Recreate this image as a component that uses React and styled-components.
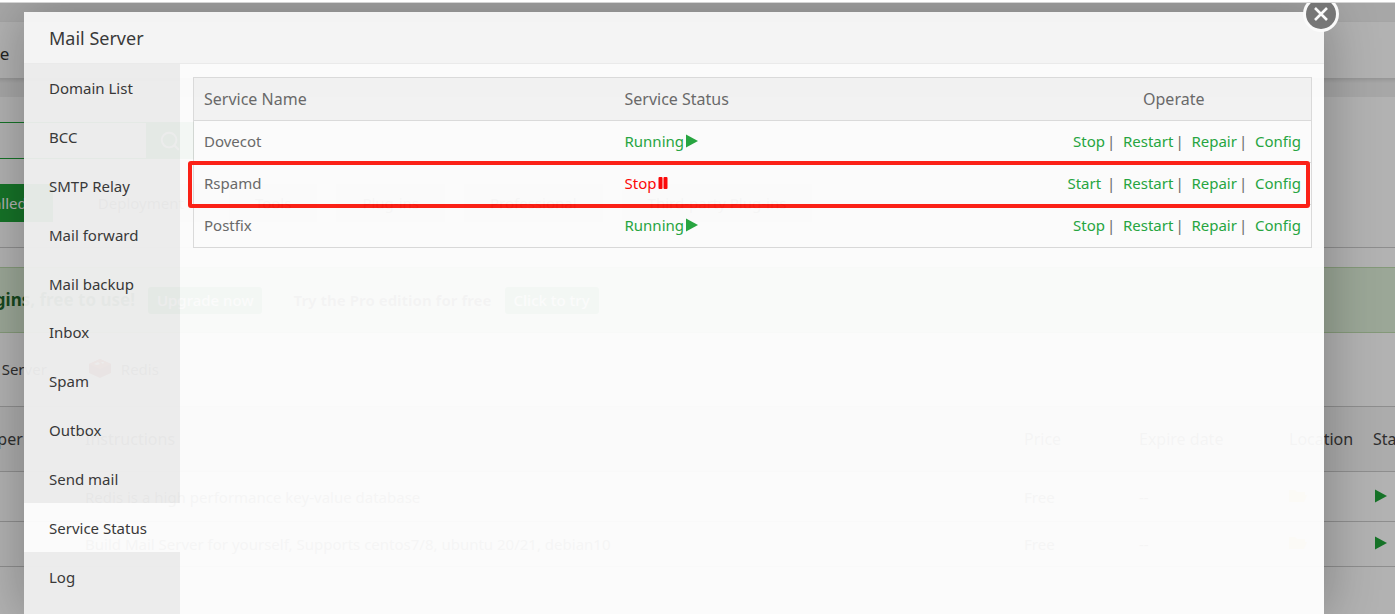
import React, {useState} from 'react';
import styled, {createGlobalStyle, css} from "styled-components";
import {Search} from "lucide-react";

const GlobalStyle = createGlobalStyle`
* {
  box-sizing: border-box;
}
body {
  margin: 0;
  background: #fff;
  color: #555;
  font-family: "Noto Sans", "Open Sans", sans-serif;
  font-size: 15px;
  line-height: 20px;
}
button, input {
  font: inherit;
}
`

const Frame = styled.div`
display: flex;
flex-direction: column;
height: 100vh;
overflow: hidden;
`
const TopStrip = styled.div`
flex: none;
height: 3px;
background: #fff;
border-bottom: 1px solid #d4d4d4;
`
const Viewport = styled.div`
position: relative;
flex: 1;
min-height: 0;
overflow: hidden;
background: #f0f0f0;
`

/* plugin store page, dimmed behind the dialog */
const Page = styled.div`
margin: 0 -60px 0 -54px;
padding-top: 19px;
`
const PageHeader = styled.header`
height: 56px;
margin-bottom: 19px;
padding: 20px 0 0 15px;
background: #fff;
box-shadow: 0 2px 4px rgba(0, 0, 0, 0.12);
color: #333;
font-size: 17px;
line-height: 24px;
`
const Card = styled.section`
padding-top: 25px;
background: #fff;
min-height: 700px;
`
const SearchForm = styled.form`
display: flex;
height: 37px;
`
const SearchInput = styled.input`
width: 200px;
border: 1px solid #20a53a;
border-right: 0;
outline: none;
`
const SearchButton = styled.button`
display: flex;
align-items: center;
justify-content: center;
width: 48px;
padding: 0;
border: 0;
background: #20a53a;
color: #fff;
`
const Tabs = styled.div`
display: flex;
gap: 19px;
margin-left: -6px;
padding: 25px 0;
border-bottom: 1px solid #ccc;
`
const Tab = styled.button`
height: 38px;
padding: 0 26px;
border: 0;
background: ${({$active}) => $active ? '#20a53a' : '#f5f5f5'};
color: ${({$active}) => $active ? '#fff' : '#555'};
`
const Banner = styled.div`
display: flex;
align-items: center;
height: 66px;
margin: 19px 0 0;
border: 1px solid #bddcae;
border-width: 1px 0;
background: #dff0d8;
color: #333;
font-weight: bold;
`
const BannerLead = styled.div`
display: flex;
justify-content: flex-end;
width: 189px;
margin-right: 13px;
color: #20662c;
font-size: 17px;
white-space: nowrap;
`
const BannerNote = styled.span`
margin: 0 13px 0 31px;
`
const BannerButton = styled.button`
height: 27px;
padding: 0 9px;
border: 0;
border-radius: 3px;
background: #20a53a;
color: #fff;
font-weight: 500;
`
const Recent = styled.div`
display: flex;
align-items: center;
gap: 42px;
height: 73px;
padding: 0 0 2px 22px;
`
const RecentItem = styled.span`
display: flex;
align-items: center;
gap: 10px;
color: #444;
`
const PluginTable = styled.table`
width: 100%;
table-layout: fixed;
border-collapse: collapse;
border-top: 1px solid #ccc;
th, td {
  height: 45px;
  padding: 0 8px;
  border-bottom: 1px solid #ccc;
  text-align: left;
  white-space: nowrap;
}
th:first-child {
  padding-left: 0;
}
td:last-child {
  padding-left: 10px;
}
tbody tr:first-child td {
  height: 50px;
}
th {
  height: 65px;
  background: #f6f6f6;
  color: #444;
  font-size: 16px;
  font-weight: normal;
}
`
const Shade = styled.div`
position: absolute;
inset: 0;
background: rgba(0, 0, 0, 0.3);
`

const Dialog = styled.section`
position: absolute;
top: 9px;
right: 71px;
bottom: 0;
left: 24px;
display: flex;
flex-direction: column;
background: #fff;
box-shadow: 1px 1px 50px rgba(0, 0, 0, 0.3);
opacity: 0.95;
`
const DialogTitle = styled.h1`
flex: none;
height: 52px;
margin: 0;
padding: 0 25px;
border-bottom: 1px solid #eee;
background: #f8f8f8;
color: #333;
font-size: 18px;
font-weight: normal;
line-height: 52px;
`
const CloseButton = styled.button`
position: absolute;
top: -16px;
right: -15px;
width: 36px;
height: 36px;
padding: 0;
border: 0;
background: none;
cursor: pointer;
svg {
  display: block;
}
`
const DialogBody = styled.div`
display: flex;
flex: 1;
min-height: 0;
`
const Sidebar = styled.nav`
flex: none;
width: 156px;
background: #f0f0f0;
`
const Menu = styled.ul`
display: grid;
grid-auto-rows: 1fr;
height: 537px;
margin: 0;
padding: 0;
list-style: none;
`
const MenuButton = styled.button`
width: 100%;
height: 100%;
padding: 0 25px;
border: 0;
background: none;
color: #333;
text-align: left;
white-space: nowrap;
cursor: pointer;
${({$active}) => $active && css`
  background: #fff;
`}
`
const Content = styled.div`
flex: 1;
padding: 13px 12px 13px 13px;
`
const ServiceTable = styled.table`
width: 100%;
table-layout: fixed;
border-collapse: collapse;
border: 1px solid #ddd;
color: #666;
`
const HeadCell = styled.th`
width: ${({$width}) => $width || 'auto'};
height: 43px;
padding: 0 10px;
border-bottom: 1px solid #ddd;
background: #f6f6f6;
font-size: 16px;
font-weight: normal;
text-align: ${({$align}) => $align || 'left'};
`
const Cell = styled.td`
height: 42px;
padding: 0 10px 2px;
text-align: ${({$align}) => $align || 'left'};
white-space: nowrap;
`
const Row = styled.tr`
position: relative;
border-bottom: 1px solid #ddd;
&:last-child td {
  height: 43px;
}
`
/* frame round the row of a stopped service */
const RowMark = styled.span`
position: absolute;
inset: -2px 2px -4px -6px;
border: 4px solid #ff1a0f;
border-radius: 3px;
pointer-events: none;
`
const Status = styled.span`
display: flex;
align-items: center;
gap: 2px;
color: ${({$running}) => $running ? '#20a53a' : '#f00'};
`
const Actions = styled.div`
display: flex;
justify-content: flex-end;
`
const Action = styled.a`
color: #20a53a;
text-decoration: none;
`
const Divider = styled.span`
width: 18px;
padding-left: 2px;
text-align: left;
`

const menu = ['Domain List', 'BCC', 'SMTP Relay', 'Mail forward', 'Mail backup', 'Inbox', 'Spam', 'Outbox', 'Send mail', 'Service Status', 'Log']

const services = [
    {name: 'Dovecot', running: true},
    {name: 'Rspamd', running: false},
    {name: 'Postfix', running: true},
]

const plugins = [
    {id: 1, text: 'Redis is a high performance key-value database'},
    {id: 2, text: 'Build Mail Server for yourself, Supports centos7/8, ubuntu 20/21, debian10'},
]

function PlayIcon({color = 'currentColor'}) {
    return (
        <svg width="12" height="14" viewBox="0 0 12 14" aria-hidden="true">
            <path d="M0 0.5L12 7L0 13.5Z" fill={color}/>
        </svg>
    )
}

function PauseIcon() {
    return (
        <svg width="10" height="12" viewBox="0 0 10 12" aria-hidden="true">
            <rect x="0.5" width="4" height="12" rx="1" fill="currentColor"/>
            <rect x="5.5" width="4" height="12" rx="1" fill="currentColor"/>
        </svg>
    )
}

function RedisIcon() {
    return (
        <svg width="22" height="20" viewBox="0 0 22 20" aria-hidden="true">
            <path d="M0 5L11 0L22 5V14L11 19L0 14Z" fill="#a41e11"/>
            <path d="M0 5L11 0L22 5L11 10Z" fill="#d82c20"/>
            <path d="M5 5L9 3L11 5L8 6ZM12 3H15L14 5Z" fill="#fff"/>
        </svg>
    )
}

function FolderIcon() {
    return (
        <svg width="18" height="14" viewBox="0 0 18 14" aria-hidden="true">
            <path d="M0 1H6L8 3H16V6H18L15 13H0Z" fill="#ffe27a"/>
        </svg>
    )
}

function CloseIcon() {
    return (
        <svg width="36" height="36" viewBox="0 0 36 36" aria-hidden="true">
            <circle cx="18" cy="18" r="18" fill="#fff"/>
            <circle cx="18" cy="18" r="15" fill="#747474"/>
            <path d="M12 12L24 24M24 12L12 24" stroke="#fff" strokeWidth="2.6"/>
        </svg>
    )
}

function PluginPage() {
    return (
        <Page inert>
            <PageHeader>Home</PageHeader>
            <Card>
                <SearchForm>
                    <SearchInput type="text" aria-label="Search plugins"/>
                    <SearchButton type="button" aria-label="Search"><Search size={22}/></SearchButton>
                </SearchForm>
                <Tabs>
                    <Tab $active>Installed</Tab>
                    <Tab>Deployment</Tab>
                    <Tab>Tools</Tab>
                    <Tab>Plug-ins</Tab>
                    <Tab>Professional</Tab>
                    <Tab>Third-party Plug-ins</Tab>
                </Tabs>
                <Banner>
                    <BannerLead>Plugins, free to use!</BannerLead>
                    <BannerButton>Upgrade now</BannerButton>
                    <BannerNote>Try the Pro edition for free</BannerNote>
                    <BannerButton>Click to try</BannerButton>
                </Banner>
                <Recent>
                    <RecentItem>Mail Server</RecentItem>
                    <RecentItem><RedisIcon/>Redis</RecentItem>
                </Recent>
                <PluginTable>
                    <colgroup>
                        <col width="131"/>
                        <col/>
                        <col width="115"/>
                        <col width="150"/>
                        <col width="84"/>
                        <col width="90"/>
                    </colgroup>
                    <thead>
                        <tr>
                            <th>Developer</th>
                            <th>Instructions</th>
                            <th>Price</th>
                            <th>Expire date</th>
                            <th>Location</th>
                            <th>Status</th>
                        </tr>
                    </thead>
                    <tbody>
                        {plugins.map(plugin => (
                            <tr key={plugin.id}>
                                <td/>
                                <td>{plugin.text}</td>
                                <td>Free</td>
                                <td>--</td>
                                <td><FolderIcon/></td>
                                <td><PlayIcon color="#20a53a"/></td>
                            </tr>
                        ))}
                    </tbody>
                </PluginTable>
            </Card>
        </Page>
    )
}

function ServiceRow({service}) {
    return (
        <Row>
            <Cell>
                {service.name}
                {!service.running && <RowMark/>}
            </Cell>
            <Cell>
                <Status $running={service.running}>
                    {service.running ? 'Running' : 'Stop'}
                    {service.running ? <PlayIcon/> : <PauseIcon/>}
                </Status>
            </Cell>
            <Cell $align="right">
                <Actions>
                    <Action href="#">{service.running ? 'Stop' : 'Start\u00a0'}</Action>
                    <Divider>|</Divider>
                    <Action href="#">Restart</Action>
                    <Divider>|</Divider>
                    <Action href="#">Repair</Action>
                    <Divider>|</Divider>
                    <Action href="#">Config</Action>
                </Actions>
            </Cell>
        </Row>
    )
}

function App() {
    const [active, setActive] = useState('Service Status')
    const [open, setOpen] = useState(true)

    return (
        <Frame>
            <GlobalStyle/>
            <TopStrip/>
            <Viewport>
                <PluginPage/>
                {open && <>
                    <Shade/>
                    <Dialog role="dialog" aria-labelledby="dialog-title">
                        <DialogTitle id="dialog-title">Mail Server</DialogTitle>
                        <DialogBody>
                            <Sidebar>
                                <Menu>
                                    {menu.map(item => (
                                        <li key={item}>
                                            <MenuButton $active={item === active} onClick={() => setActive(item)}>
                                                {item}
                                            </MenuButton>
                                        </li>
                                    ))}
                                </Menu>
                            </Sidebar>
                            <Content>
                                <ServiceTable>
                                    <thead>
                                        <tr>
                                            <HeadCell $width="421px">Service Name</HeadCell>
                                            <HeadCell>Service Status</HeadCell>
                                            <HeadCell $width="275px" $align="center">Operate</HeadCell>
                                        </tr>
                                    </thead>
                                    <tbody>
                                        {services.map(service => <ServiceRow key={service.name} service={service}/>)}
                                    </tbody>
                                </ServiceTable>
                            </Content>
                        </DialogBody>
                        <CloseButton aria-label="Close" onClick={() => setOpen(false)}><CloseIcon/></CloseButton>
                    </Dialog>
                </>}
            </Viewport>
        </Frame>
    );
}

export default App;
